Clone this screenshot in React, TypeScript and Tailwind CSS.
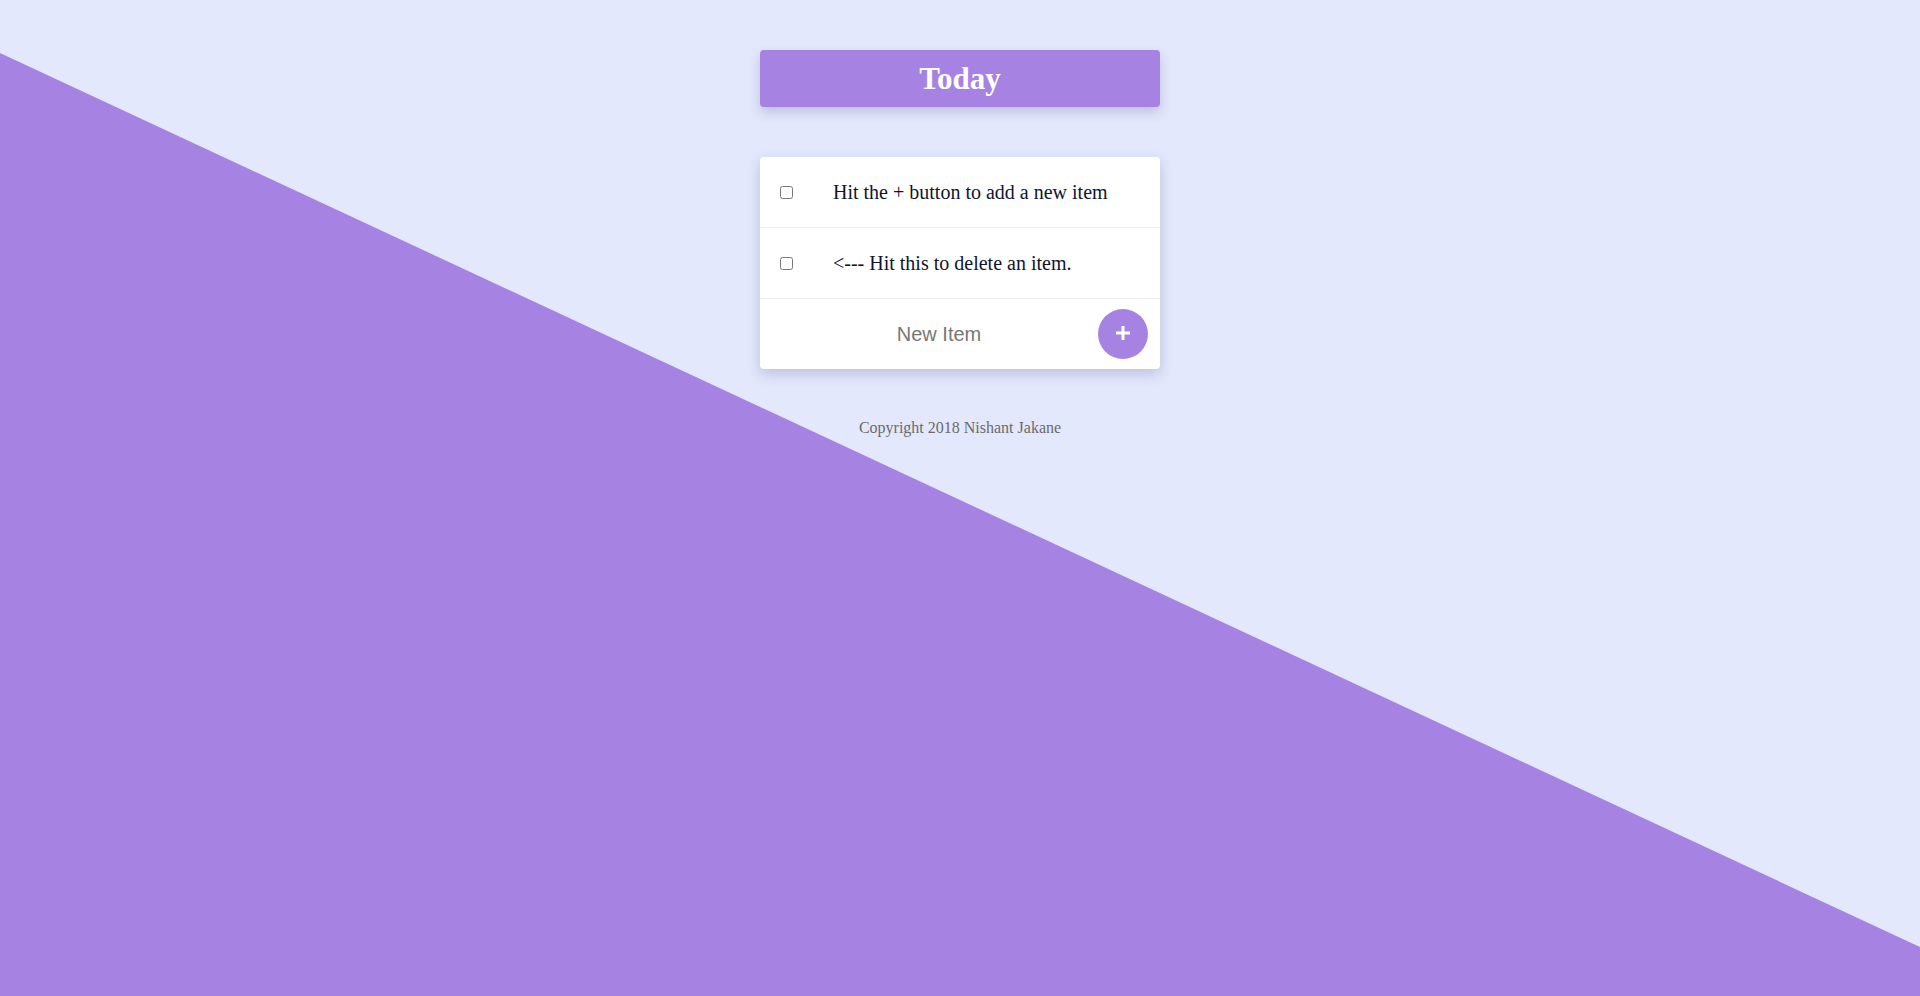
export default function App() {
  const items = ['Hit the + button to add a new item', '<--- Hit this to delete an item.'];

  return (
    <div className="relative min-h-[996px] w-full overflow-hidden bg-[#e3e8fc]">
      {/* diagonal backdrop */}
      <div className="absolute inset-0 bg-[#a683e3] [clip-path:polygon(0_53px,100%_947px,100%_100%,0_100%)]" />

      <div className="relative mx-auto flex w-[400px] flex-col pt-[50px]">
        <div className="flex h-[57px] items-center justify-center rounded-[4px] bg-[#a683e3] shadow-[0_5px_12px_rgba(60,50,110,0.22)]">
          <h1 className="font-['Liberation_Serif',serif] text-[31px] font-bold leading-none text-white">Today</h1>
        </div>

        <div className="mt-[50px] overflow-hidden rounded-[4px] bg-white shadow-[0_5px_14px_rgba(60,50,110,0.22)]">
          {items.map((text) => (
            <div key={text} className="flex h-[71px] items-center border-b border-[#eeeeee] pl-[20px]">
              <input type="checkbox" className="m-0 h-[13px] w-[13px] shrink-0" />
              <span className="ml-[40px] font-['Liberation_Serif',serif] text-[20px] leading-none text-[#0f1530]">{text}</span>
            </div>
          ))}
          <div className="flex h-[70px] items-center pr-[12px]">
            <input
              type="text"
              placeholder="New Item"
              className="min-w-0 flex-1 bg-transparent pl-[32px] text-center font-['Liberation_Sans',sans-serif] text-[20px] text-[#555] outline-none placeholder:text-[#777]"
            />
            <button className="ml-[12px] flex h-[50px] w-[50px] shrink-0 items-center justify-center rounded-full bg-[#a683e3]">
              <svg width="16" height="16" viewBox="0 0 16 16" className="-mt-[3px]">
                <path d="M8 1v14M1 8h14" stroke="white" strokeWidth="3" />
              </svg>
            </button>
          </div>
        </div>

        <p className="mt-[50px] text-center font-['Liberation_Serif',serif] text-[16px] leading-[18px] text-[#6b6b6b]">
          Copyright 2018 Nishant Jakane
        </p>
      </div>
    </div>
  );
}
